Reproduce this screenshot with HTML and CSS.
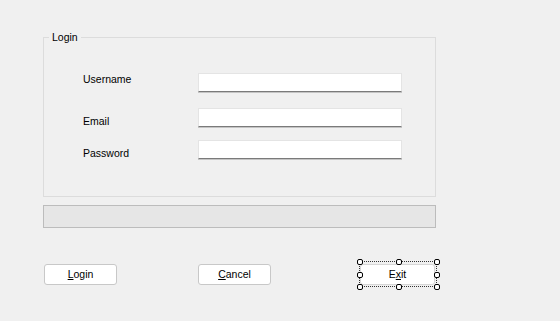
FILE: index.html
```html
<!DOCTYPE html>
<html>
<head>
<meta charset="utf-8">
<link rel="stylesheet" href="styles.css">
</head>
<body>
<div class="form">
  <fieldset class="group">
    <legend class="group-title">Login</legend>
    <div class="row row-user">
      <label class="lbl lbl-user">Username</label>
      <div class="textbox"></div>
    </div>
    <div class="row row-email">
      <label class="lbl lbl-low">Email</label>
      <div class="textbox"></div>
    </div>
    <div class="row row-pass">
      <label class="lbl lbl-low">Password</label>
      <div class="textbox"></div>
    </div>
  </fieldset>
  <div class="progress"></div>
  <div class="buttons">
    <button class="btn btn-login"><u>L</u>ogin</button>
    <button class="btn btn-cancel"><u>C</u>ancel</button>
    <div class="selected">
      <button class="btn btn-exit">E<u>x</u>it</button>
      <div class="sel-frame">
        <span class="handle h-tl"></span>
        <span class="handle h-tc"></span>
        <span class="handle h-tr"></span>
        <span class="handle h-ml"></span>
        <span class="handle h-mr"></span>
        <span class="handle h-bl"></span>
        <span class="handle h-bc"></span>
        <span class="handle h-br"></span>
      </div>
    </div>
  </div>
</div>
</body>
</html>
```
FILE: styles.css
```css
html, body {
  margin: 0;
  padding: 0;
  background: #f0f0f0;
}
body {
  font-family: "Liberation Sans", Arial, sans-serif;
  font-size: 10.5px;
  color: #000;
  width: 560px;
  height: 321px;
  overflow: hidden;
}
.form {
  padding-top: 31px;
}
.group {
  box-sizing: border-box;
  margin: 0 0 0 43px;
  width: 393px;
  height: 166px;
  padding: 0;
  border: 1px solid #dcdcdc;
  min-width: 0;
}
.group-title {
  margin-left: 5px;
  padding: 0 3px 0 3px;
  line-height: 12px;
  font-size: 10.5px;
}
.row {
  display: flex;
  align-items: flex-start;
}
.row-user { margin-top: 30px; }
.row-email { margin-top: 16px; }
.row-pass { margin-top: 13px; }
.lbl {
  width: 115px;
  margin-left: 39px;
  line-height: 12px;
  white-space: nowrap;
}
.lbl-user { margin-top: 0; }
.lbl-low { margin-top: 7px; }
.textbox {
  box-sizing: border-box;
  width: 204px;
  height: 19px;
  background: #fff;
  border: 1px solid #e4e4e4;
  border-bottom: 1px solid #7a7a7a;
  box-shadow: 0 1px 0 #c4c4c4;
}
.progress {
  box-sizing: border-box;
  margin: 8px 0 0 43px;
  width: 393px;
  height: 23px;
  background: #e6e6e6;
  border: 1px solid #bcbcbc;
}
.buttons {
  display: flex;
  align-items: flex-start;
  margin-top: 36px;
  padding-left: 44px;
}
.btn {
  box-sizing: border-box;
  height: 21px;
  padding: 0;
  background: #fff;
  border: 1px solid #c8c8c8;
  border-radius: 3px;
  font-family: "Liberation Sans", Arial, sans-serif;
  font-size: 10.5px;
  color: #000;
  line-height: 19px;
  text-align: center;
}
.btn u {
  text-decoration-thickness: 1px;
  text-underline-offset: 1px;
}
.btn-login { width: 73px; }
.btn-cancel { width: 73px; margin-left: 81px; }
.selected {
  position: relative;
  margin-left: 89px;
}
.btn-exit {
  width: 75px;
  border-color: #d6d6d6;
  display: block;
}
.sel-frame {
  position: absolute;
  left: -1px;
  top: -3px;
  width: 78px;
  height: 26px;
  border: 1px dotted #333;
  box-sizing: border-box;
}
.handle {
  position: absolute;
  box-sizing: border-box;
  width: 6px;
  height: 6px;
  background: #fff;
  border: 1px solid #000;
  border-radius: 2px;
}
.h-tl { left: -3.5px; top: -3.5px; }
.h-tc { left: 35.5px; top: -3.5px; }
.h-tr { right: -3.5px; top: -3.5px; }
.h-ml { left: -3.5px; top: 9.5px; }
.h-mr { right: -3.5px; top: 9.5px; }
.h-bl { left: -3.5px; bottom: -3.5px; }
.h-bc { left: 35.5px; bottom: -3.5px; }
.h-br { right: -3.5px; bottom: -3.5px; }
```
